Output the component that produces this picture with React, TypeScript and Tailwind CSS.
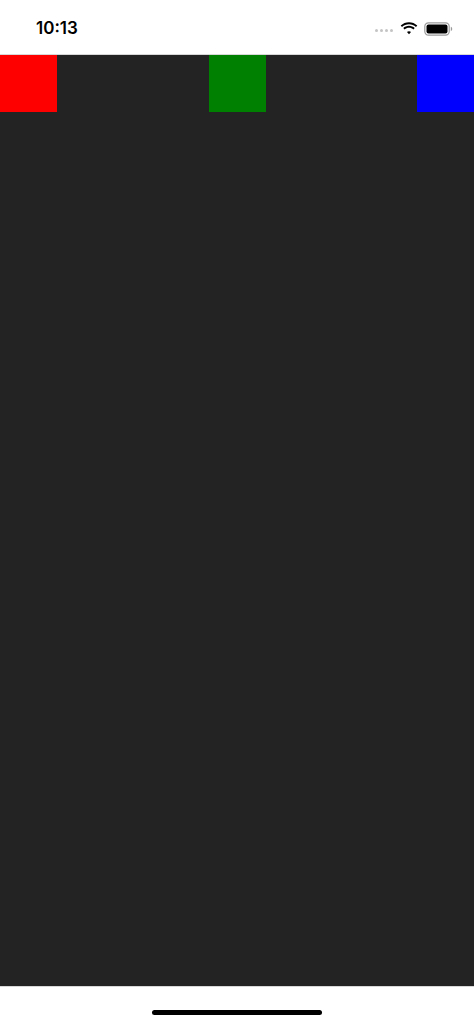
import React from 'react';

const Wifi = () => (
  <svg width="18" height="13" viewBox="0 0 18 13" fill="black">
    <path d="M9 2.2c2.7 0 5.1 1 7 2.7l1.3-1.4C15 1.4 12.1.2 9 .2S3 1.4.7 3.5L2 4.9c1.9-1.7 4.3-2.7 7-2.7z" />
    <path d="M9 5.8c1.7 0 3.2.6 4.4 1.7l1.3-1.4C13.2 4.7 11.2 3.8 9 3.8s-4.2.9-5.7 2.3l1.3 1.4C5.8 6.4 7.3 5.8 9 5.8z" />
    <path d="M9 9.3c.8 0 1.5.3 2 .8L9 12.3 7 10.1c.5-.5 1.2-.8 2-.8z" />
  </svg>
);

const Battery = () => (
  <svg width="29" height="14" viewBox="0 0 29 14">
    <rect x="0.8" y="0.8" width="24.4" height="12.4" rx="3.6" fill="none" stroke="#9a9a9a" strokeWidth="1.2" />
    <rect x="2.5" y="2.5" width="21" height="9" rx="2" fill="black" />
    <path d="M26.8 4.8c.9.3 1.4 1.2 1.4 2.2s-.5 1.9-1.4 2.2z" fill="#9a9a9a" />
  </svg>
);

const StatusBar = () => (
  <div className="h-[55px] bg-white flex items-center justify-between pl-[36px] pr-[21px] border-b border-[#d8d8d8]">
    <span className="text-[17px] font-semibold text-black mt-[3px]" style={{ fontFamily: 'Inter, "Liberation Sans", sans-serif' }}>
      10:13
    </span>
    <div className="flex items-center gap-[6px] mt-[3px]">
      <div className="flex items-center gap-[2px] mt-[4px] mr-[1px]">
        {[...Array(4)].map((_, i) => (
          <div key={i} className="w-[3px] h-[3px] rounded-full bg-[#c4c4c4]" />
        ))}
      </div>
      <Wifi />
      <Battery />
    </div>
  </div>
);

export default function App() {
  return (
    <div className="w-[474px] h-[1025px] flex flex-col bg-white overflow-hidden">
      <StatusBar />
      <div className="flex-1 bg-[#232323] flex justify-between items-start border-b border-[#d8d8d8]">
        <div className="w-[57px] h-[57px] bg-[#ff0000]" />
        <div className="w-[57px] h-[57px] bg-[#008000]" />
        <div className="w-[57px] h-[57px] bg-[#0000ff]" />
      </div>
      <div className="h-[38px] bg-white flex justify-center pt-[23px]">
        <div className="w-[170px] h-[5px] rounded-full bg-black" />
      </div>
    </div>
  );
}
